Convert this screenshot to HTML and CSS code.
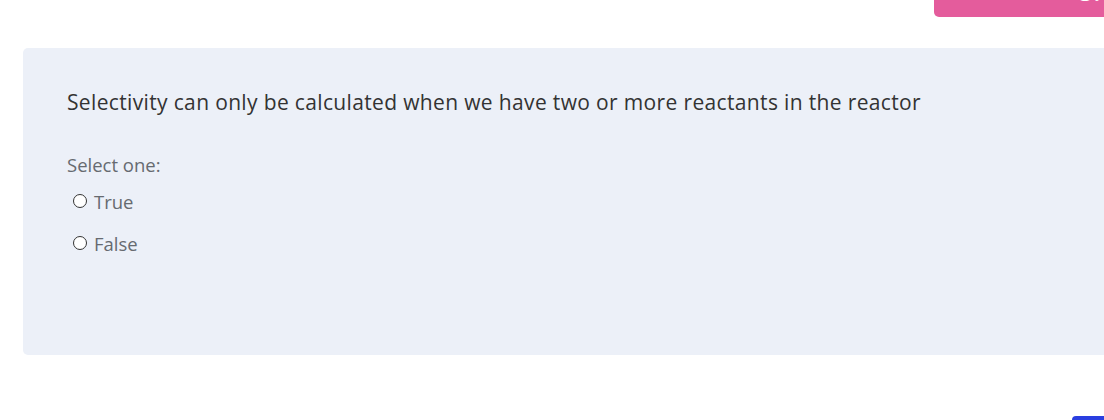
FILE: index.html
```html
<!DOCTYPE html>
<html>
<head>
<meta charset="utf-8">
<link rel="stylesheet" href="styles.css">
</head>
<body>
<div class="top">
  <div class="pink-btn"><span class="btn-text">O.</span></div>
</div>
<div class="card">
  <p class="question">Selectivity can only be calculated when we have two or more reactants in the reactor</p>
  <div class="prompt">Select one:</div>
  <label class="option"><span class="radio"></span><span class="opt-text">True</span></label>
  <label class="option"><span class="radio"></span><span class="opt-text">False</span></label>
</div>
<div class="bottom">
  <div class="blue-btn"></div>
</div>
</body>
</html>
```
FILE: styles.css
```css
html, body {
  margin: 0;
  padding: 0;
  background: #ffffff;
  width: 1104px;
  height: 420px;
  overflow: hidden;
  font-family: "Open Sans", "Liberation Sans", sans-serif;
}
.top {
  height: 48px;
  display: flex;
  justify-content: flex-end;
}
.pink-btn {
  width: 170px;
  height: 17px;
  background: #e45c9c;
  border-radius: 0 0 0 5px;
  overflow: hidden;
  display: flex;
  justify-content: flex-end;
  align-items: flex-end;
}
.btn-text {
  color: #fff;
  font-weight: 700;
  font-size: 22px;
  line-height: 22px;
  margin-right: 4px;
  margin-bottom: 14px;
}
.card {
  margin-left: 23px;
  height: 307px;
  background: #ecf0f8;
  border-radius: 5px 0 0 5px;
  padding: 0 0 0 44px;
  box-sizing: border-box;
  overflow: hidden;
}
.question {
  margin: 0;
  padding-top: 40px;
  font-size: 21px;
  line-height: 28px;
  color: #333333;
  letter-spacing: 0.35px;
  white-space: nowrap;
}
.prompt {
  margin-top: 38px;
  font-size: 18.5px;
  line-height: 22px;
  color: #666a70;
}
.option {
  display: flex;
  align-items: center;
  height: 26px;
  margin-top: 12px;
  margin-left: 6px;
}
.option + .option {
  margin-top: 16px;
}
.radio {
  width: 12px;
  height: 12px;
  border: 1.5px solid #333;
  border-radius: 50%;
  background: #fff;
  margin-right: 7px;
}
.opt-text {
  font-size: 18.5px;
  color: #666a70;
}
.bottom {
  height: 65px;
  display: flex;
  justify-content: flex-end;
  align-items: flex-end;
}
.blue-btn {
  width: 32px;
  height: 4px;
  background: #2a3ee0;
  border-radius: 4px 0 0 0;
}
```
